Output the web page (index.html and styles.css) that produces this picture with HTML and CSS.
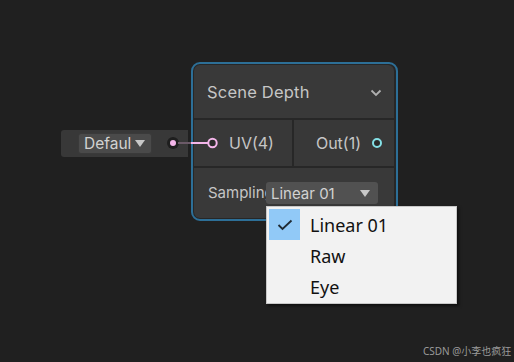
FILE: index.html
```html
<!DOCTYPE html>
<html>
<head>
<meta charset="utf-8">
<link rel="stylesheet" href="styles.css">
</head>
<body>
<div class="canvas">
  <div class="field">
    <div class="dd small">Defaul<span class="tri"></span></div>
  </div>
  <div class="node">
    <div class="header">
      <span class="title">Scene Depth</span>
      <svg class="chev" width="12" height="8" viewBox="0 0 12 8"><path d="M1.5 1.5 L6 6 L10.5 1.5" fill="none" stroke="#b0b0b0" stroke-width="1.8"/></svg>
    </div>
    <div class="ports">
      <div class="cell in">
        <span class="plabel">UV(4)</span>
      </div>
      <div class="cell out">
        <span class="plabel">Out(1)</span>
        <span class="port cyan"></span>
      </div>
    </div>
    <div class="body">
      <span class="label">Sampling</span>
      <div class="dd wide">Linear 01<span class="tri"></span></div>
    </div>
  </div>
  <svg class="wire" width="60" height="20" viewBox="0 0 60 20">
    <circle cx="8" cy="10" r="6" fill="#1e1e1e"/>
    <circle cx="8" cy="10" r="3" fill="#f4b6ea"/>
    <line x1="13" y1="10" x2="26" y2="10" stroke="#6b5a68" stroke-width="2"/>
    <line x1="26" y1="10" x2="43" y2="10" stroke="#f4b6ea" stroke-width="2"/>
    <circle cx="47.5" cy="10" r="4.2" fill="#2a2a2a" stroke="#f4b6ea" stroke-width="2"/>
  </svg>
  <div class="menu">
    <div class="item">
      <span class="check sel"><svg width="16" height="12" viewBox="0 0 16 12"><path d="M1.5 6 L5.5 10 L14.5 1.5" fill="none" stroke="#1f2a33" stroke-width="1.8"/></svg></span>
      <span class="itext">Linear 01</span>
    </div>
    <div class="item">
      <span class="check"></span>
      <span class="itext">Raw</span>
    </div>
    <div class="item">
      <span class="check"></span>
      <span class="itext">Eye</span>
    </div>
  </div>
  <div class="mark">CSDN @小李也疯狂</div>
</div>
</body>
</html>
```
FILE: styles.css
```css
html, body {
  margin: 0;
  padding: 0;
  background: #202020;
}
body {
  width: 514px;
  height: 362px;
  overflow: hidden;
  font-family: Inter, "Noto Sans", sans-serif;
}
.canvas {
  position: relative;
  width: 514px;
  height: 362px;
}
.field {
  position: absolute;
  left: 61px;
  top: 130px;
  width: 127px;
  height: 27px;
  background: #383838;
  border-radius: 3px 0 0 3px;
  display: flex;
  align-items: center;
  padding-left: 17px;
  box-sizing: border-box;
}
.dd {
  display: flex;
  align-items: center;
  box-sizing: border-box;
  color: #d2d2d2;
  border-radius: 3px;
  position: relative;
}
.dd.small {
  width: 74px;
  height: 21px;
  background: #4a4a4a;
  border: 1px solid #3a3a3a;
  padding-left: 5px;
  font-size: 15.5px;
}
.dd.small .tri {
  position: absolute;
  left: 56px;
  top: 6px;
}
.tri {
  width: 0;
  height: 0;
  border-left: 5px solid transparent;
  border-right: 5px solid transparent;
  border-top: 7px solid #c8c8c8;
}
.wire {
  position: absolute;
  left: 165px;
  top: 133px;
  z-index: 2;
}
.node {
  position: absolute;
  left: 191px;
  top: 62px;
  width: 207px;
  height: 159px;
  box-sizing: border-box;
  border: 2px solid #2d6f97;
  border-radius: 9px;
  background: #272727;
  padding: 1px 2px 1px 1px;
  display: flex;
  flex-direction: column;
  gap: 2px;
}
.header {
  height: 53px;
  background: #393939;
  border-radius: 6px 6px 0 0;
  display: flex;
  align-items: center;
  justify-content: space-between;
  padding: 0 12px 0 13px;
}
.title {
  color: #c6c6c6;
  font-size: 16.5px;
  letter-spacing: 0.2px;
}
.chev {
  margin-top: 2px;
}
.ports {
  height: 46px;
  display: flex;
  gap: 2px;
}
.cell {
  background: #383838;
  display: flex;
  align-items: center;
  position: relative;
}
.cell.in {
  width: 98px;
}
.cell.out {
  flex: 1;
  justify-content: flex-end;
  padding-right: 12px;
  gap: 11px;
}
.plabel {
  color: #c6c6c6;
  font-size: 16px;
}
.cell.in .plabel {
  margin-left: 35px;
}
.port {
  width: 6px;
  height: 6px;
  border-radius: 50%;
  border: 2px solid;
  background: #2a2a2a;
  display: block;
}
.port.cyan {
  border-color: #84e0e6;
}
.body {
  height: 50px;
  background: #393939;
  border-radius: 0 0 6px 6px;
  display: flex;
  align-items: flex-start;
  padding: 13px 0 0 14px;
  box-sizing: border-box;
}
.label {
  color: #c6c6c6;
  font-size: 15px;
  width: 58px;
  overflow: hidden;
  white-space: nowrap;
  line-height: 22px;
  margin-top: 1px;
}
.dd.wide {
  width: 112px;
  height: 22px;
  background: #515151;
  padding-left: 5px;
  font-size: 15px;
  margin-top: 1px;
}
.dd.wide .tri {
  position: absolute;
  left: 94px;
  top: 8px;
}
.menu {
  position: absolute;
  left: 266px;
  top: 206px;
  width: 191px;
  height: 98px;
  box-sizing: border-box;
  background: #f2f2f2;
  border: 1px solid #c8c8c8;
  box-shadow: 2px 2px 3px rgba(0, 0, 0, 0.55);
  padding: 2px 2px 1px 2px;
  display: flex;
  flex-direction: column;
  z-index: 3;
}
.item {
  height: 31px;
  display: flex;
  align-items: center;
}
.check {
  width: 31px;
  height: 31px;
  display: flex;
  align-items: center;
  justify-content: center;
}
.check.sel {
  background: #91c9f7;
}
.itext {
  margin-left: 10px;
  font-family: "Noto Sans", "Open Sans", sans-serif;
  font-size: 18px;
  color: #111111;
}
.mark {
  position: absolute;
  left: 423px;
  top: 343px;
  font-family: "Noto Sans", "Noto Sans CJK SC", sans-serif;
  font-size: 10px;
  color: #9a9a9a;
  white-space: nowrap;
}
```
